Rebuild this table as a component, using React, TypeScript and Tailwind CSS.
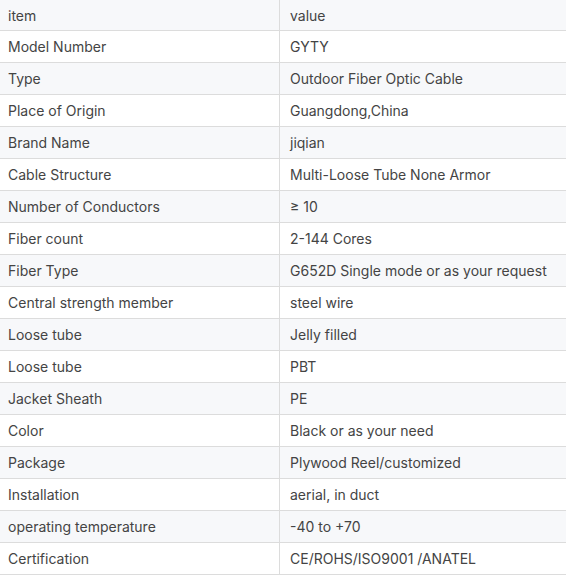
const rows: [string, string][] = [
  ['item', 'value'],
  ['Model Number', 'GYTY'],
  ['Type', 'Outdoor Fiber Optic Cable'],
  ['Place of Origin', 'Guangdong,China'],
  ['Brand Name', 'jiqian'],
  ['Cable Structure', 'Multi-Loose Tube None Armor'],
  ['Number of Conductors', '≥ 10'],
  ['Fiber count', '2-144 Cores'],
  ['Fiber Type', 'G652D Single mode or as your request'],
  ['Central strength member', 'steel wire'],
  ['Loose tube', 'Jelly filled'],
  ['Loose tube', 'PBT'],
  ['Jacket Sheath', 'PE'],
  ['Color', 'Black or as your need'],
  ['Package', 'Plywood Reel/customized'],
  ['Installation', 'aerial, in duct'],
  ['operating temperature', '-40 to +70'],
  ['Certification', 'CE/ROHS/ISO9001 /ANATEL'],
]

export default function App() {
  return (
    <div className="w-[566px] bg-white font-['Inter',sans-serif] text-[14px] text-[#444]">
      {rows.map(([k, v], i) => (
        <div
          key={i}
          className={`flex border-b border-[#dcdcdc] ${i === 0 ? 'h-[31px]' : 'h-[32px]'} ${i % 2 === 0 ? 'bg-[#f7f8fa]' : 'bg-white'}`}
        >
          <div className="flex w-[280px] items-center border-r border-[#dcdcdc] pl-2">{k}</div>
          <div className="flex flex-1 items-center pl-[10px]">{v}</div>
        </div>
      ))}
    </div>
  )
}
